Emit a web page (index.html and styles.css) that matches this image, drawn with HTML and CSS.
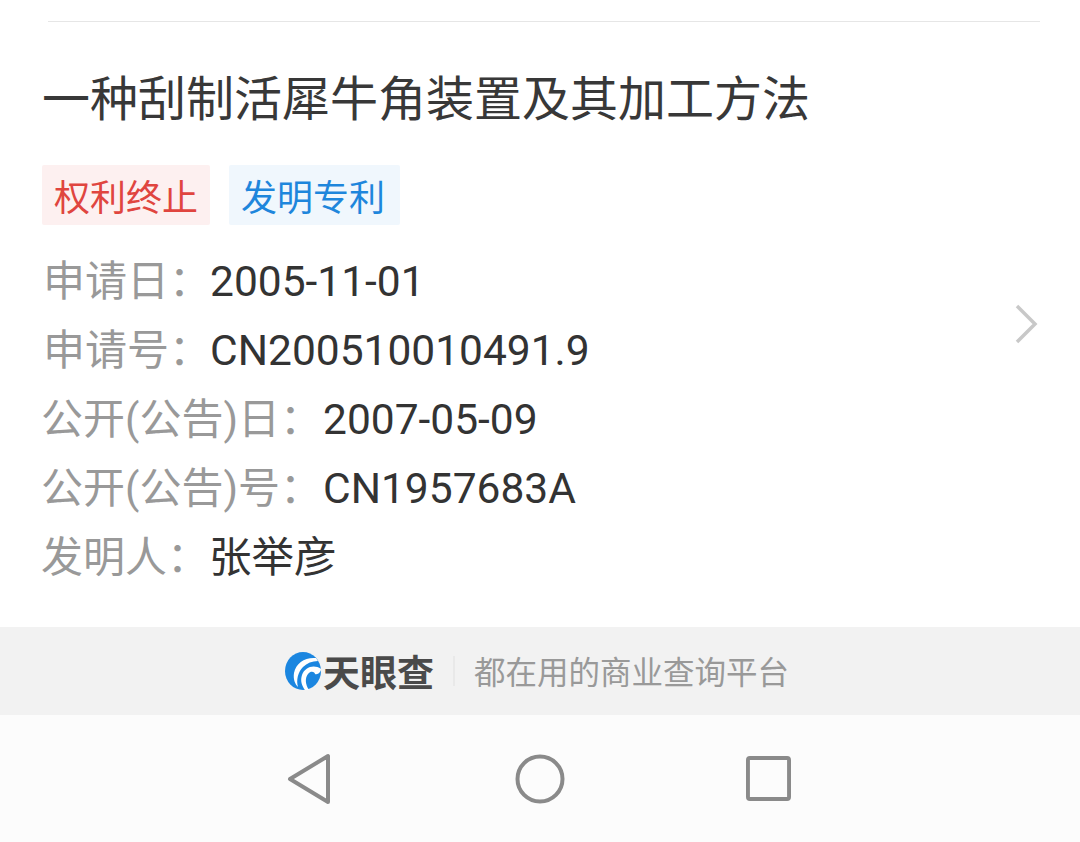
FILE: index.html
```html
<!DOCTYPE html>
<html lang="zh">
<head>
    <meta charset="utf-8">
    <title>一种刮制活犀牛角装置及其加工方法</title>
    <link rel="stylesheet" href="styles.css">
</head>
<body>
    <div class="page">
        <div class="divider"></div>
        <div class="patent">
            <h1 class="title">一种刮制活犀牛角装置及其加工方法</h1>
            <div class="tags">
                <span class="tag tag-red">权利终止</span>
                <span class="tag tag-blue">发明专利</span>
            </div>
            <div class="detail">
                <div class="rows">
                    <div class="row"><span class="label label-short">申请日：</span><span class="value">2005-11-01</span></div>
                    <div class="row"><span class="label label-short">申请号：</span><span class="value">CN200510010491.9</span></div>
                    <div class="row"><span class="label label-long">公开(公告)日：</span><span class="value">2007-05-09</span></div>
                    <div class="row"><span class="label label-long">公开(公告)号：</span><span class="value">CN1957683A</span></div>
                    <div class="row"><span class="label label-name">发明人：</span><span class="value">张举彦</span></div>
                </div>
                <svg class="chevron" viewBox="0 0 24 40" width="24" height="40">
                    <path d="M3 2 L21 20 L3 38" fill="none" stroke="#c8c8c8" stroke-width="3.500"/>
                </svg>
            </div>
        </div>
        <div class="brand">
            <svg class="brand-icon" viewBox="0 0 36 38" width="36" height="38">
                <ellipse cx="18" cy="19" rx="18" ry="19" fill="#1b86e0"/>
                <path d="M31 6 C20 5 11 11 9 21 C8 27 10 32 13 35 C11 28 13 20 18 15 C22 11 27 9 33 9 Z" fill="#fff"/>
                <path d="M36 17 C29 12 20 15 17 23 C15 29 17 34 20 38 L24 38 C20 32 20 26 23 22 C26 18 30 20 30 22 C33 23 36 20 36 17 Z" fill="#fff"/>
            </svg>
            <span class="brand-name">天眼查</span>
            <span class="brand-sep"></span>
            <span class="brand-slogan">都在用的商业查询平台</span>
        </div>
        <div class="navbar">
            <svg viewBox="0 0 44 52" width="44" height="52">
                <path d="M41 3 L41 49 L3 26 Z" fill="none" stroke="#8a8a8a" stroke-width="4" stroke-linejoin="round"/>
            </svg>
            <svg class="nav-home" viewBox="0 0 50 50" width="50" height="50">
                <circle cx="25" cy="25" r="22.500" fill="none" stroke="#8a8a8a" stroke-width="4"/>
            </svg>
            <svg viewBox="0 0 46 46" width="45" height="45">
                <rect x="2" y="2" width="42" height="42" rx="2" fill="none" stroke="#8a8a8a" stroke-width="4"/>
            </svg>
        </div>
    </div>
</body>
</html>
```

FILE: styles.css
```css
* {
    box-sizing: border-box;
}

body {
    margin: 0;
    background-color: #fff;
    font-family: Roboto, "Noto Sans CJK SC", sans-serif;
}

.page {
    height: 842px;
    overflow: hidden;
    padding-top: 21px;
}

.divider {
    height: 1px;
    margin: 0 40px 0 48px;
    background-color: #e6e6e6;
}

.patent {
    height: 605px;
    padding: 47px 40px 0 42px;
}

.title {
    margin: 0;
    font-size: 48px;
    line-height: 62px;
    font-weight: 400;
    color: #383838;
}

.tags {
    display: flex;
    gap: 19px;
    margin-top: 34px;
}

.tag {
    height: 60px;
    padding: 0 12px;
    font-size: 36px;
    line-height: 68px;
    border-radius: 2px;
}

.tag-red {
    background-color: #fdf0f0;
    color: #e0453f;
}

.tag-blue {
    padding-right: 15px;
    background-color: #f0f7fd;
    color: #1e86dc;
}

.detail {
    display: flex;
    align-items: flex-start;
    justify-content: space-between;
    margin-top: 22px;
}

.rows {
    display: flex;
    flex-direction: column;
}

.row {
    display: flex;
    align-items: baseline;
    height: 69px;
    line-height: 69px;
    font-size: 42px;
}

.label {
    color: #999;
}

.label-short {
    margin-left: 1px;
    margin-right: -1px;
}

.label-long {
    margin-left: -1px;
    margin-right: 1px;
}

.label-name {
    margin-left: -1px;
    margin-right: 0;
}

.value {
    font-size: 42.500px;
    color: #333;
}

.chevron {
    margin-top: 57px;
    margin-right: 2px;
}

.brand {
    display: flex;
    align-items: center;
    height: 88px;
    padding-left: 285px;
    background-color: #f2f2f2;
}

.brand-name {
    margin-left: 2px;
    font-size: 37px;
    font-weight: 700;
    color: #4a4a4a;
}

.brand-sep {
    width: 2px;
    height: 30px;
    margin: 0 19px 0 19px;
    background-color: #e9e9e9;
}

.brand-slogan {
    margin-top: -3px;
    font-size: 31.500px;
    color: #999;
}

.navbar {
    display: flex;
    align-items: center;
    height: 127px;
    padding-left: 287px;
    background-color: #fcfcfc;
}

.nav-home {
    margin: 0 181px 0 184px;
}
```
